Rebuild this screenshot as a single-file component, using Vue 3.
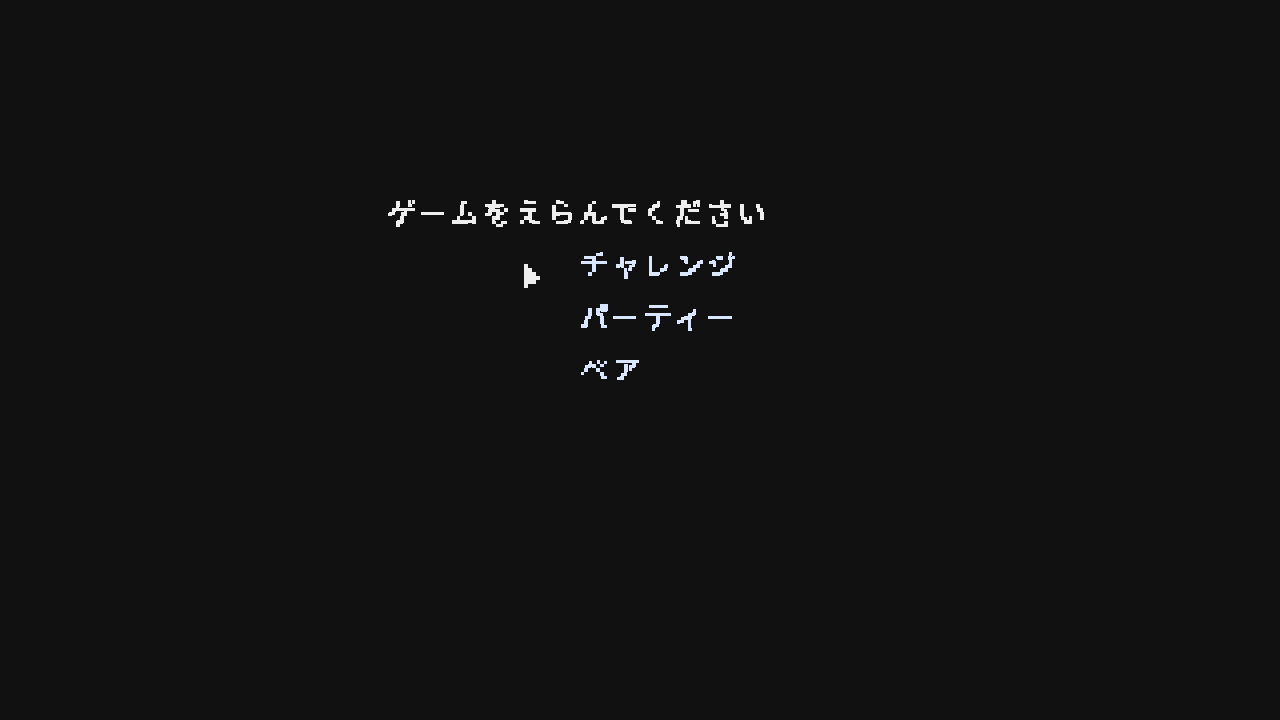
<template>
  <div class="screen">
    <svg class="defs" width="0" height="0" aria-hidden="true">
      <!-- samples the text on a 4px grid so it reads like a bitmap font -->
      <filter id="pixelate" x="0" y="0" width="100%" height="100%" color-interpolation-filters="sRGB">
        <feFlood x="1" y="1" width="2" height="2" flood-color="#000" />
        <feComposite width="4" height="4" />
        <feTile result="grid" />
        <feComposite in="SourceGraphic" in2="grid" operator="in" />
        <feMorphology operator="dilate" radius="1" />
        <feComponentTransfer>
          <feFuncA type="discrete" tableValues="0 1 1" />
        </feComponentTransfer>
      </filter>
    </svg>

    <div class="title">ゲームをえらんでください</div>

    <div class="menu">
      <div v-for="(item, i) in items" :key="item" class="row">
        <svg v-if="i === selected" class="cursor" width="16" height="24" viewBox="0 0 16 24">
          <path d="M0 0h4v4h4v4h4v4h4v4h-4v4h-8v4H0z" fill="#eeeeee" />
        </svg>
        <span class="label">{{ item }}</span>
      </div>
    </div>
  </div>
</template>

<script setup>
const items = ['チャレンジ', 'パーティー', 'ペア']
const selected = 0
</script>

<style>
html,
body {
  margin: 0;
  background: #111111;
}
</style>

<style scoped>
.screen {
  width: 1280px;
  height: 720px;
  box-sizing: border-box;
  padding-top: 192px;
  background: #111111;
  font-family: "Noto Sans CJK JP", sans-serif;
  font-weight: 500;
  color: #eeeeee;
  overflow: hidden;
}

.defs {
  position: absolute;
}

.title {
  margin-left: 388px;
  width: 384px;
  height: 40px;
  font-size: 28px;
  line-height: 40px;
  letter-spacing: 4px;
  white-space: nowrap;
  filter: url(#pixelate);
}

.menu {
  margin-top: 12px;
  margin-left: 524px;
}

.row {
  position: relative;
  height: 52px;
  padding-left: 56px;
}

.cursor {
  position: absolute;
  left: 0;
  top: 20px;
}

.label {
  display: block;
  width: 200px;
  height: 40px;
  font-size: 28px;
  line-height: 40px;
  letter-spacing: 4px;
  color: #dbe6ff;
  white-space: nowrap;
  filter: url(#pixelate);
}
</style>
